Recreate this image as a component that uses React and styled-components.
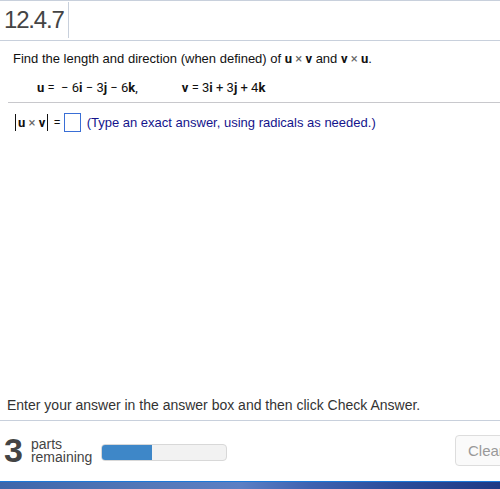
import React from 'react';
import styled, { createGlobalStyle } from 'styled-components';

const GlobalStyle = createGlobalStyle`
  html, body {
    margin: 0;
    padding: 0;
    background: #fff;
  }
  body {
    font-family: "Liberation Sans", Arial, sans-serif;
    color: #333;
  }
`;

const Page = styled.div`
  width: 500px;
  height: 489px;
  display: flex;
  flex-direction: column;
  overflow: hidden;
  border-top: 1px solid #c8d0dc;
  box-sizing: border-box;
`;

const Header = styled.div`
  display: flex;
  height: 39px;
  border-bottom: 1px solid #c8d0dc;
`;

const QuestionId = styled.div`
  width: 69px;
  padding: 1px 0 0 4px;
  box-sizing: border-box;
  font-size: 24px;
  letter-spacing: -1.2px;
  line-height: 34px;
  color: #444;
  border-right: 1px solid #c8d0dc;
  height: 36px;
  margin-top: 1px;
`;

const Body = styled.div`
  flex: 1;
  padding: 9px 0 0 8px;
`;

const Prompt = styled.div`
  font-size: 13px;
  line-height: 18px;
  color: #111;
  padding-left: 5px;
`;

const Math = styled.span`
  font-family: Roboto, "Liberation Sans", sans-serif;
  font-size: 13px;
  color: #111;
`;

const Times = styled.span`
  color: #666;
`;

const B = styled.b`
  font-weight: 700;
`;

const Given = styled.div`
  display: flex;
  gap: 44px;
  padding: 11px 0 0 29px;
  height: 23px;
  line-height: 18px;
  border-bottom: 1px solid #c8c8cc;
`;

const AnswerRow = styled.div`
  display: flex;
  align-items: center;
  padding: 8px 0 0 5px;
  height: 22px;
  font-size: 13px;
`;

const Bar = styled.span`
  display: inline-block;
  width: 1px;
  height: 17px;
  background: #111;
  margin: 0 2px;
  vertical-align: middle;
`;

const AnswerBox = styled.span`
  display: inline-block;
  width: 15px;
  height: 17px;
  border: 1px solid #3a6fd6;
  margin: 0 6px 0 3px;
`;

const Hint = styled.span`
  color: #14148c;
  font-size: 13px;
`;

const Instruction = styled.div`
  font-size: 14px;
  line-height: 18px;
  padding: 0 0 6px 7px;
  color: #333;
  border-bottom: 1px solid #c8d0dc;
`;

const Footer = styled.div`
  display: flex;
  align-items: center;
  height: 60px;
  padding: 0 0 0 4px;
  box-sizing: border-box;
`;

const Count = styled.div`
  font-size: 34px;
  font-weight: 700;
  color: #444;
  line-height: 34px;
  margin-top: -2px;
`;

const CountLabel = styled.div`
  font-size: 14px;
  line-height: 13px;
  color: #444;
  margin: -1px 0 0 8px;
  width: 60px;
`;

const Progress = styled.div`
  width: 124px;
  height: 15px;
  border: 1px solid #d8d8d8;
  border-radius: 4px;
  background: #f2f2f2;
  overflow: hidden;
  margin: 2px 0 0 10px;
`;

const Fill = styled.div`
  height: 100%;
  background: #3e87c8;
`;

const ClearButton = styled.button`
  margin: -2px -30px 0 auto;
  width: 75px;
  height: 31px;
  flex-shrink: 0;
  white-space: nowrap;
  border: 1px solid #ddd;
  border-radius: 4px;
  background: #fafafa;
  color: #999;
  font-family: "Liberation Sans", Arial, sans-serif;
  font-size: 15px;
  text-align: left;
  padding: 0 0 0 12px;
`;

const BottomBand = styled.div`
  height: 7px;
  border-top: 1px solid #1c78d8;
  background: linear-gradient(90deg, #3d66aa 0%, #5478b8 30%, #5b7fc4 48%, #3f62b0 62%, #2a4c9a 80%, #1f3a85 100%);
`;

export default function App() {
  const parts = 3;
  const done = 0.4;
  return (
    <>
      <GlobalStyle />
      <Page>
        <Header>
          <QuestionId>12.4.7</QuestionId>
        </Header>
        <Body>
          <Prompt>
            Find the length and direction (when defined) of <Math><B>u</B> <Times>×</Times> <B>v</B></Math> and <Math><B>v</B> <Times>×</Times> <B>u</B></Math>.
          </Prompt>
          <Given>
            <Math><B>u</B> = &nbsp;− 6<B>i</B> − 3<B>j</B> − 6<B>k</B>,</Math>
            <Math><B>v</B> = 3<B>i</B> + 3<B>j</B> + 4<B>k</B></Math>
          </Given>
          <AnswerRow>
            <Bar />
            <Math><B>u</B> <Times>×</Times> <B>v</B></Math>
            <Bar />
            <Math>&nbsp;=</Math>
            <AnswerBox />
            <Hint>(Type an exact answer, using radicals as needed.)</Hint>
          </AnswerRow>
        </Body>
        <Instruction>Enter your answer in the answer box and then click Check Answer.</Instruction>
        <Footer>
          <Count>{parts}</Count>
          <CountLabel>parts remaining</CountLabel>
          <Progress>
            <Fill style={{ width: `${done * 100}%` }} />
          </Progress>
          <ClearButton>Clear All</ClearButton>
        </Footer>
        <BottomBand />
      </Page>
    </>
  );
}
